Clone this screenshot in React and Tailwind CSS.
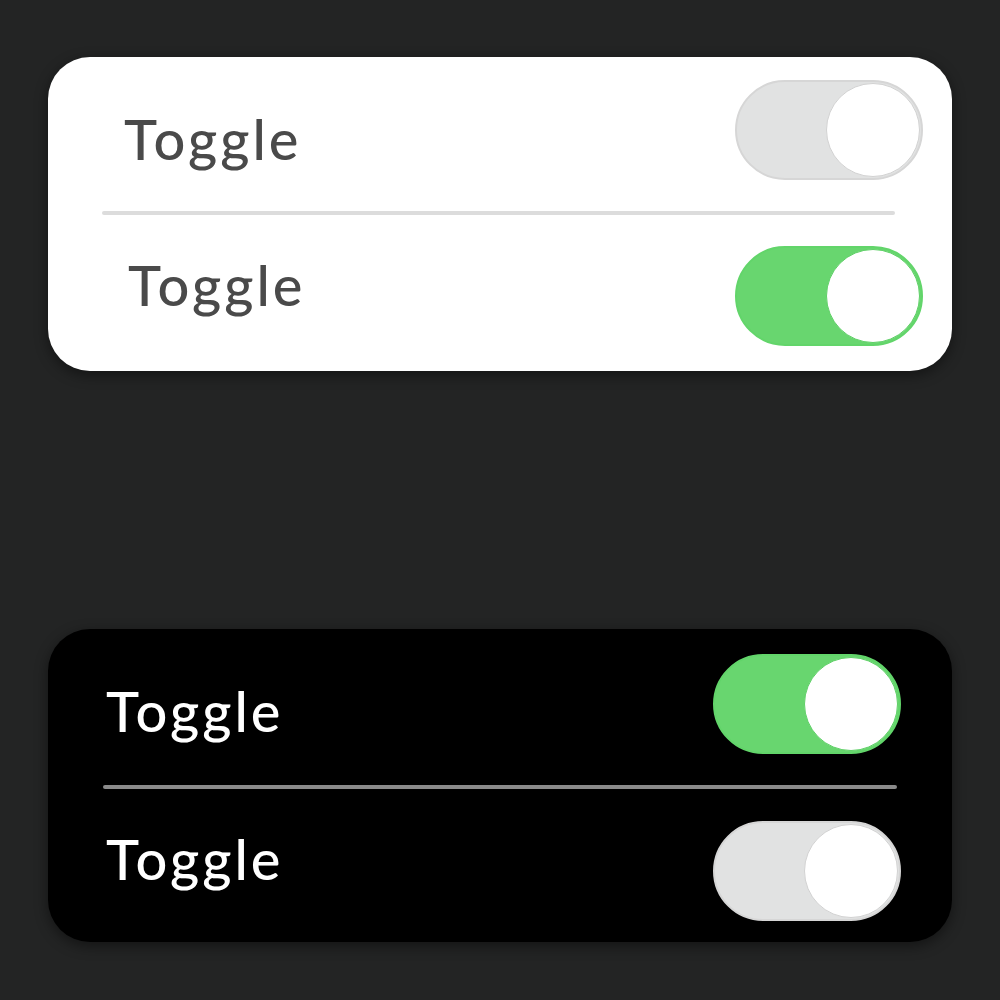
import React, { useState } from 'react';

const font = { fontFamily: 'Lato, "Liberation Sans", sans-serif' };

const Switch = ({ checked, onChange }) => (
    <button
        type="button"
        role="switch"
        aria-checked={checked}
        onClick={() => onChange(!checked)}
        className={`flex h-[100px] w-[188px] shrink-0 items-center justify-end rounded-full border-2 p-[1px] ${
            checked ? 'border-[#62d56a] bg-[#68d66f]' : 'border-[#d6d6d6] bg-[#e1e2e2]'
        }`}
    >
        <span
            className={`block h-[94px] w-[94px] rounded-full bg-white ${
                checked ? 'border border-[#5fd067]' : 'border border-[#d2d2d2]'
            }`}
        />
    </button>
);

const Row = ({ label, checked, onChange, labelClass, textShift, toggleClass }) => (
    <div className="flex items-center justify-between">
        <span
            className={`text-[56px] leading-none font-medium tracking-[3px] ${labelClass} ${textShift}`}
            style={font}
        >
            {label}
        </span>
        <div className={toggleClass}>
            <Switch checked={checked} onChange={onChange} />
        </div>
    </div>
);

export default function App() {
    const [light, setLight] = useState([false, true]);
    const [dark, setDark] = useState([true, false]);

    return (
        <div className="min-h-screen w-full bg-[#232424] px-[48px] pt-[57px]">
            {/* light card */}
            <div className="flex h-[314px] w-[904px] flex-col rounded-[42px] bg-white pt-[23px] shadow-[0_4px_14px_rgba(0,0,0,0.45)]">
                <Row
                    label="Toggle"
                    checked={light[0]}
                    onChange={(v) => setLight([v, light[1]])}
                    labelClass="ml-[76px] text-[#4a4a4a]"
                    textShift="pt-[18px]"
                    toggleClass="mr-[29px]"
                />
                <div className="mt-[31px] mb-[31px] ml-[54px] mr-[57px] h-[4px] rounded-full bg-[#dcdcdc]" />
                <Row
                    label="Toggle"
                    checked={light[1]}
                    onChange={(v) => setLight([light[0], v])}
                    labelClass="ml-[80px] text-[#4a4a4a]"
                    textShift="pb-[22px]"
                    toggleClass="mr-[29px]"
                />
            </div>

            {/* dark card */}
            <div className="mt-[258px] flex h-[313px] w-[904px] flex-col rounded-[42px] bg-black pt-[25px] shadow-[0_4px_14px_rgba(0,0,0,0.45)]">
                <Row
                    label="Toggle"
                    checked={dark[0]}
                    onChange={(v) => setDark([v, dark[1]])}
                    labelClass="ml-[58px] text-white"
                    textShift="pt-[14px]"
                    toggleClass="mr-[51px]"
                />
                <div className="mt-[31px] mb-[32px] mx-[55px] h-[4px] rounded-full bg-[#8a8a8a]" />
                <Row
                    label="Toggle"
                    checked={dark[1]}
                    onChange={(v) => setDark([dark[0], v])}
                    labelClass="ml-[58px] text-white"
                    textShift="pb-[24px]"
                    toggleClass="mr-[51px]"
                />
            </div>
        </div>
    );
}
